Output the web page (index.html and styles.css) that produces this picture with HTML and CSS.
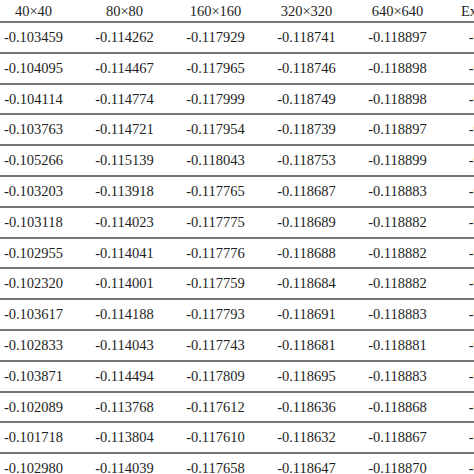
FILE: index.html
```html
<!DOCTYPE html>
<html>
<head>
<meta charset="utf-8">
<link rel="stylesheet" href="styles.css">
</head>
<body>
<div class="table">
  <div class="row head">
    <div class="cell">40×40</div><div class="cell">80×80</div><div class="cell">160×160</div><div class="cell">320×320</div><div class="cell">640×640</div><div class="cell last">Extrapolated</div>
  </div>
  <div class="row"><div class="cell">-0.103459</div><div class="cell">-0.114262</div><div class="cell">-0.117929</div><div class="cell">-0.118741</div><div class="cell">-0.118897</div><div class="cell last">-0.118950</div></div>
  <div class="row"><div class="cell">-0.104095</div><div class="cell">-0.114467</div><div class="cell">-0.117965</div><div class="cell">-0.118746</div><div class="cell">-0.118898</div><div class="cell last">-0.118950</div></div>
  <div class="row"><div class="cell">-0.104114</div><div class="cell">-0.114774</div><div class="cell">-0.117999</div><div class="cell">-0.118749</div><div class="cell">-0.118898</div><div class="cell last">-0.118950</div></div>
  <div class="row"><div class="cell">-0.103763</div><div class="cell">-0.114721</div><div class="cell">-0.117954</div><div class="cell">-0.118739</div><div class="cell">-0.118897</div><div class="cell last">-0.118950</div></div>
  <div class="row"><div class="cell">-0.105266</div><div class="cell">-0.115139</div><div class="cell">-0.118043</div><div class="cell">-0.118753</div><div class="cell">-0.118899</div><div class="cell last">-0.118950</div></div>
  <div class="row"><div class="cell">-0.103203</div><div class="cell">-0.113918</div><div class="cell">-0.117765</div><div class="cell">-0.118687</div><div class="cell">-0.118883</div><div class="cell last">-0.118940</div></div>
  <div class="row"><div class="cell">-0.103118</div><div class="cell">-0.114023</div><div class="cell">-0.117775</div><div class="cell">-0.118689</div><div class="cell">-0.118882</div><div class="cell last">-0.118940</div></div>
  <div class="row"><div class="cell">-0.102955</div><div class="cell">-0.114041</div><div class="cell">-0.117776</div><div class="cell">-0.118688</div><div class="cell">-0.118882</div><div class="cell last">-0.118940</div></div>
  <div class="row"><div class="cell">-0.102320</div><div class="cell">-0.114001</div><div class="cell">-0.117759</div><div class="cell">-0.118684</div><div class="cell">-0.118882</div><div class="cell last">-0.118940</div></div>
  <div class="row"><div class="cell">-0.103617</div><div class="cell">-0.114188</div><div class="cell">-0.117793</div><div class="cell">-0.118691</div><div class="cell">-0.118883</div><div class="cell last">-0.118940</div></div>
  <div class="row"><div class="cell">-0.102833</div><div class="cell">-0.114043</div><div class="cell">-0.117743</div><div class="cell">-0.118681</div><div class="cell">-0.118881</div><div class="cell last">-0.118940</div></div>
  <div class="row"><div class="cell">-0.103871</div><div class="cell">-0.114494</div><div class="cell">-0.117809</div><div class="cell">-0.118695</div><div class="cell">-0.118883</div><div class="cell last">-0.118940</div></div>
  <div class="row"><div class="cell">-0.102089</div><div class="cell">-0.113768</div><div class="cell">-0.117612</div><div class="cell">-0.118636</div><div class="cell">-0.118868</div><div class="cell last">-0.118930</div></div>
  <div class="row"><div class="cell">-0.101718</div><div class="cell">-0.113804</div><div class="cell">-0.117610</div><div class="cell">-0.118632</div><div class="cell">-0.118867</div><div class="cell last">-0.118930</div></div>
  <div class="row"><div class="cell">-0.102980</div><div class="cell">-0.114039</div><div class="cell">-0.117658</div><div class="cell">-0.118647</div><div class="cell">-0.118870</div><div class="cell last">-0.118930</div></div>
</div>
</body>
</html>
```
FILE: styles.css
```css
html, body {
  margin: 0;
  padding: 0;
  background: #ffffff;
  overflow: hidden;
}

.table {
  margin-left: -12px;
  width: 575px;
  font-family: "Liberation Serif", "Times New Roman", serif;
  font-size: 14.5px;
  color: #1e1e1e;
}

.row {
  display: flex;
  box-sizing: border-box;
  height: 30.8px;
  border-bottom: 2px solid #767676;
}

.row.head {
  height: 23px;
  padding-top: 1px;
}

.cell {
  width: 91px;
  flex: none;
  text-align: center;
  line-height: 28.8px;
}

.head .cell {
  line-height: 20px;
}

.cell.last {
  width: 110px;
}
```
